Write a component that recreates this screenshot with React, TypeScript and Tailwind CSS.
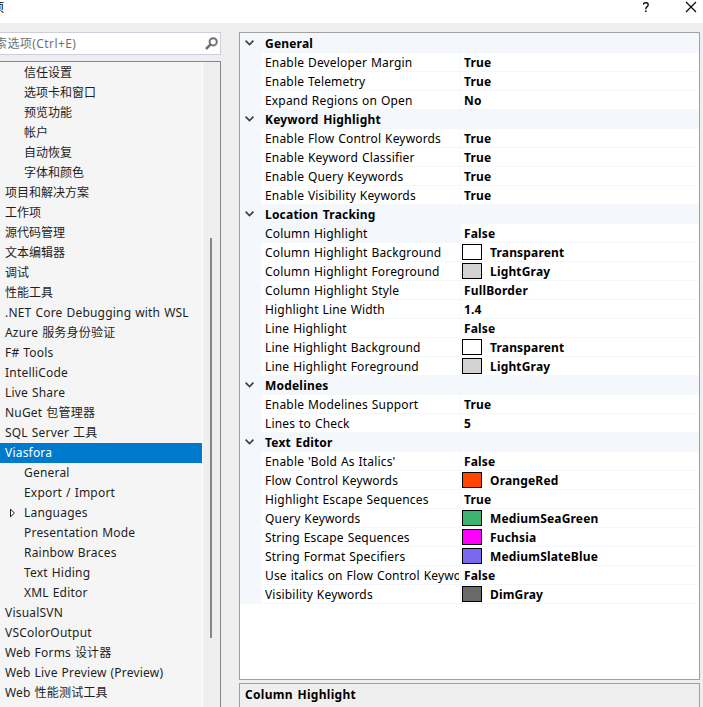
import React, { useState } from 'react';

interface TreeItem {
  label: string;
  child?: boolean;
  expandable?: boolean;
}

interface Property {
  name: string;
  value: string;
  swatch?: string;
}

interface Category {
  title: string;
  properties: Property[];
}

const treeItems: TreeItem[] = [
  { label: '信任设置', child: true },
  { label: '选项卡和窗口', child: true },
  { label: '预览功能', child: true },
  { label: '帐户', child: true },
  { label: '自动恢复', child: true },
  { label: '字体和颜色', child: true },
  { label: '项目和解决方案' },
  { label: '工作项' },
  { label: '源代码管理' },
  { label: '文本编辑器' },
  { label: '调试' },
  { label: '性能工具' },
  { label: '.NET Core Debugging with WSL' },
  { label: 'Azure 服务身份验证' },
  { label: 'F# Tools' },
  { label: 'IntelliCode' },
  { label: 'Live Share' },
  { label: 'NuGet 包管理器' },
  { label: 'SQL Server 工具' },
  { label: 'Viasfora' },
  { label: 'General', child: true },
  { label: 'Export / Import', child: true },
  { label: 'Languages', child: true, expandable: true },
  { label: 'Presentation Mode', child: true },
  { label: 'Rainbow Braces', child: true },
  { label: 'Text Hiding', child: true },
  { label: 'XML Editor', child: true },
  { label: 'VisualSVN' },
  { label: 'VSColorOutput' },
  { label: 'Web Forms 设计器' },
  { label: 'Web Live Preview (Preview)' },
  { label: 'Web 性能测试工具' },
];

const categories: Category[] = [
  {
    title: 'General',
    properties: [
      { name: 'Enable Developer Margin', value: 'True' },
      { name: 'Enable Telemetry', value: 'True' },
      { name: 'Expand Regions on Open', value: 'No' },
    ],
  },
  {
    title: 'Keyword Highlight',
    properties: [
      { name: 'Enable Flow Control Keywords', value: 'True' },
      { name: 'Enable Keyword Classifier', value: 'True' },
      { name: 'Enable Query Keywords', value: 'True' },
      { name: 'Enable Visibility Keywords', value: 'True' },
    ],
  },
  {
    title: 'Location Tracking',
    properties: [
      { name: 'Column Highlight', value: 'False' },
      { name: 'Column Highlight Background', value: 'Transparent', swatch: 'bg-white' },
      { name: 'Column Highlight Foreground', value: 'LightGray', swatch: 'bg-[#d3d3d3]' },
      { name: 'Column Highlight Style', value: 'FullBorder' },
      { name: 'Highlight Line Width', value: '1.4' },
      { name: 'Line Highlight', value: 'False' },
      { name: 'Line Highlight Background', value: 'Transparent', swatch: 'bg-white' },
      { name: 'Line Highlight Foreground', value: 'LightGray', swatch: 'bg-[#d3d3d3]' },
    ],
  },
  {
    title: 'Modelines',
    properties: [
      { name: 'Enable Modelines Support', value: 'True' },
      { name: 'Lines to Check', value: '5' },
    ],
  },
  {
    title: 'Text Editor',
    properties: [
      { name: "Enable 'Bold As Italics'", value: 'False' },
      { name: 'Flow Control Keywords', value: 'OrangeRed', swatch: 'bg-[#ff4500]' },
      { name: 'Highlight Escape Sequences', value: 'True' },
      { name: 'Query Keywords', value: 'MediumSeaGreen', swatch: 'bg-[#3cb371]' },
      { name: 'String Escape Sequences', value: 'Fuchsia', swatch: 'bg-[#ff00ff]' },
      { name: 'String Format Specifiers', value: 'MediumSlateBlue', swatch: 'bg-[#7b68ee]' },
      { name: 'Use italics on Flow Control Keywords', value: 'False' },
      { name: 'Visibility Keywords', value: 'DimGray', swatch: 'bg-[#696969]' },
    ],
  },
];

const TitleBar: React.FC = () => (
  <div className="flex h-[23px] shrink-0 items-start justify-between bg-white">
    <span className="-ml-[8px] text-[12px] leading-[15px] text-black">项</span>
    <div className="flex items-start">
      <svg className="mt-[1px] mr-[35px] h-[12px] w-[8px]" viewBox="0 0 8 12" fill="none" stroke="#000" strokeWidth="1.3">
        <path d="M1.6 3.4V2.6Q2.2 1.6 4 1.6Q6.2 1.7 6.2 3.7Q6.2 5 4.9 5.9Q3.8 6.7 3.8 8.2" />
        <path d="M3.8 9.6V11" strokeWidth="1.5" />
      </svg>
      <svg className="mt-[1px] mr-[6px] h-[12px] w-[12px]" viewBox="0 0 12 12" fill="none" stroke="#000" strokeWidth="1.1">
        <path d="M1 1L11 11M11 1L1 11" />
      </svg>
    </div>
  </div>
);

const SearchBox: React.FC = () => (
  <div className="flex h-[23px] w-[221px] items-center justify-between border border-l-0 border-[#cccedb] bg-white pr-[2px]">
    <span className="-ml-[5px] whitespace-nowrap text-[12px] leading-[20px] tracking-[0.42px] text-[#717171]">索选项(Ctrl+E)</span>
    <svg className="h-[13px] w-[13px]" viewBox="0 0 13 13" fill="none" stroke="#717171">
      <circle cx="8.2" cy="4.8" r="3.6" strokeWidth="2" />
      <path d="M5.6 7.4L1 12" strokeWidth="2.6" />
    </svg>
  </div>
);

const Chevron: React.FC = () => (
  <svg className="h-[6px] w-[9px]" viewBox="0 0 9 6" fill="none" stroke="#404040" strokeWidth="1.7">
    <path d="M0.6 0.7L4.5 4.6L8.4 0.7" />
  </svg>
);

// Chinese-only labels keep the font's own spacing
const hasLatin = (text: string) => /[A-Za-z]/.test(text);

export default function App() {
  const [selectedItem, setSelectedItem] = useState('Viasfora');
  const [selectedProperty, setSelectedProperty] = useState('Column Highlight');

  return (
    <div className="flex h-[707px] w-[703px] flex-col overflow-hidden bg-[#efefef] font-['Noto_Sans','Noto_Sans_CJK_SC',sans-serif] text-[12px] text-black">
      <TitleBar />
      <div className="flex min-h-0 flex-1 pt-[9px]">
        <div className="flex w-[221px] shrink-0 flex-col gap-[6px]">
          <SearchBox />
          <div className="flex min-h-0 flex-1 overflow-hidden border-t border-r border-[#828790]">
            <div className="w-[202px] shrink-0 bg-[#f5f5f5] pt-[1px]">
              {treeItems.map((item) => (
                <div
                  key={item.label}
                  onClick={() => setSelectedItem(item.label)}
                  className={`flex h-[20px] items-center whitespace-nowrap ${
                    item.label === selectedItem ? 'bg-[#007acc] text-white' : 'text-[#1e1e1e]'
                  } ${item.child ? 'pl-[9px]' : 'pl-[5px]'}`}
                >
                  {item.child && (
                    <span className="flex w-[15px] shrink-0">
                      {item.expandable && (
                        <svg className="h-[10px] w-[7px]" viewBox="0 0 7 10" fill="#fff" stroke="#1e1e1e">
                          <path d="M1.5 1.2V8.8L5.4 5Z" />
                        </svg>
                      )}
                    </span>
                  )}
                  <span
                    className={`leading-[20px] ${
                      hasLatin(item.label) ? 'tracking-[0.2px] [word-spacing:0.6px]' : ''
                    }`}
                  >
                    {item.label}
                  </span>
                </div>
              ))}
            </div>
            <div className="flex flex-1 border-l border-white bg-[#efefef] pl-[7px] pt-[176px]">
              <div className="h-[400px] w-[2px] bg-[#868686]" />
            </div>
          </div>
        </div>

        <div className="ml-[18px] flex w-[461px] flex-col gap-[3px]">
          <div className="h-[648px] shrink-0 border border-[#a0a0a0] bg-white">
            {categories.map((category, index) => (
              <div key={category.title}>
                <div className={`flex items-center bg-[#f4f7fc] ${index === 0 ? 'h-[20px] pt-[1px]' : 'h-[19px]'}`}>
                  <span className="flex w-[25px] shrink-0 pb-[1px] pl-[5px]">
                    <Chevron />
                  </span>
                  <span className="font-bold leading-[19px] tracking-[0.2px] [word-spacing:1.2px]">{category.title}</span>
                </div>
                {category.properties.map((property) => (
                  <div key={property.name} onClick={() => setSelectedProperty(property.name)} className="flex h-[19px]">
                    <div className="w-[21px] shrink-0 bg-[#f4f7fc]" />
                    <div
                      className={`w-[200px] shrink-0 border-r border-b border-[#f4f7fc] pl-[4px] ${
                        property.name === selectedProperty ? 'bg-[#f4f7fc]' : ''
                      }`}
                    >
                      <div className="h-[18px] w-[194px] overflow-hidden whitespace-nowrap leading-[19px] tracking-[0.17px] [word-spacing:0.6px]">
                        {property.name}
                      </div>
                    </div>
                    <div className="flex flex-1 border-b border-[#f4f7fc] font-bold leading-[19px] tracking-[0.17px]">
                      {property.swatch && (
                        <span className={`mt-[1px] -mr-[1px] ml-[1px] h-[16px] w-[20px] border border-black ${property.swatch}`} />
                      )}
                      <span className={property.swatch ? 'ml-[9px]' : 'ml-[3px]'}>{property.value}</span>
                    </div>
                  </div>
                ))}
              </div>
            ))}
          </div>
          <div className="flex-1 border border-b-0 border-[#a0a0a0] pl-[5px] font-bold leading-[21px] tracking-[0.3px] [word-spacing:1.2px]">
            {selectedProperty}
          </div>
        </div>
      </div>
    </div>
  );
}
